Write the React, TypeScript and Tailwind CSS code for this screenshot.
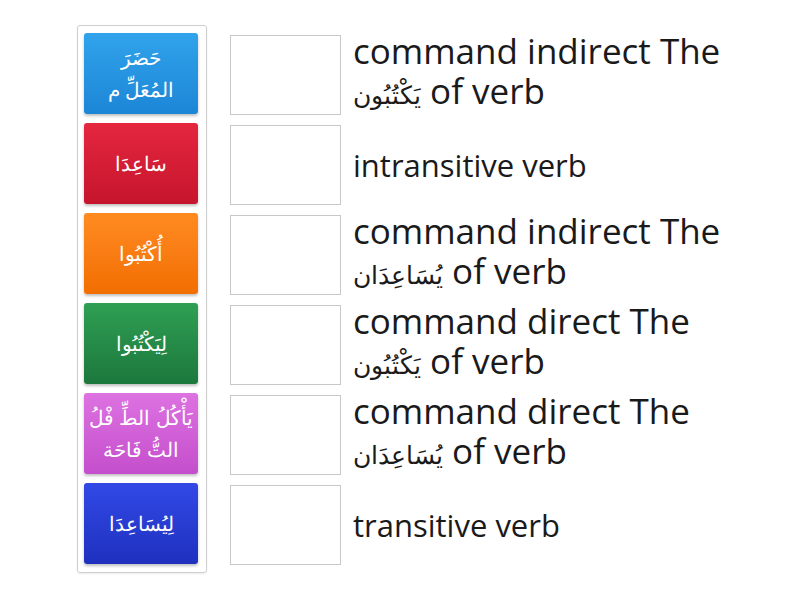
import { ReactNode } from 'react';

const tiles: { label: ReactNode; cls: string }[] = [
  { label: <>حَضَرَ<br />المُعَلِّ م</>, cls: 'from-[#31a3ec] to-[#1c86d6]' },
  { label: 'سَاعِدَا', cls: 'from-[#e5263f] to-[#c5152d]' },
  { label: 'أُكْتُبُوا', cls: 'from-[#ff8b20] to-[#f26e00]' },
  { label: 'لِيَكْتُبُوا', cls: 'from-[#2f9f53] to-[#1c783d]' },
  { label: <>يَأْكُلُ الطِّ فْلُ<br />التُّ فَاحَة</>, cls: 'from-[#dd72e1] to-[#c44ecc]' },
  { label: 'لِيُسَاعِدَا', cls: 'from-[#3249e6] to-[#1f30bf]' },
];

const answers: { first: string; second?: string; small?: boolean }[] = [
  { first: 'command indirect The', second: 'يَكْتُبُون' },
  { first: 'intransitive verb', small: true },
  { first: 'command indirect The', second: 'يُسَاعِدَان' },
  { first: 'command direct The', second: 'يَكْتُبُون' },
  { first: 'command direct The', second: 'يُسَاعِدَان' },
  { first: 'transitive verb', small: true },
];

function Tile({ label, cls }: { label: ReactNode; cls: string }) {
  return (
    <div
      className={`h-[81px] w-[114px] rounded-[3px] bg-gradient-to-b ${cls} flex items-center justify-center text-center text-white text-[20px] leading-[32px] shadow-[0_2px_3px_rgba(0,0,0,0.25)]`}
    >
      <span dir="rtl">{label}</span>
    </div>
  );
}

function Row({ first, second, small }: { first: string; second?: string; small?: boolean }) {
  return (
    <div className="flex items-center h-[80px]">
      <div className="w-[111px] h-[80px] border border-[#c8c8c8] bg-white shrink-0" />
      <div className="ml-[12px] text-[#1a1a1a] -mt-[6px] whitespace-nowrap">
        {small ? (
          <div className="text-[31px] leading-[40px] mt-[6px]">{first}</div>
        ) : (
          <div className="text-[35px] leading-[40px]">
            <div>{first}</div>
            <div>
              <span className="text-[25px]">{second}</span> of verb
            </div>
          </div>
        )}
      </div>
    </div>
  );
}

export default function App() {
  return (
    <div className="w-[800px] h-[600px] bg-white flex items-start pt-[25px] pl-[77px] font-['Open_Sans',sans-serif]">
      <div className="w-[130px] border border-[#cfcfcf] rounded-[3px] px-[6px] pt-[7px] pb-[8px] flex flex-col gap-[9px] shadow-[0_1px_2px_rgba(0,0,0,0.08)]">
        {tiles.map((t, i) => (
          <Tile key={i} label={t.label} cls={t.cls} />
        ))}
      </div>
      <div className="ml-[23px] pt-[10px] flex flex-col gap-[10px]">
        {answers.map((a, i) => (
          <Row key={i} first={a.first} second={a.second} small={a.small} />
        ))}
      </div>
    </div>
  );
}
